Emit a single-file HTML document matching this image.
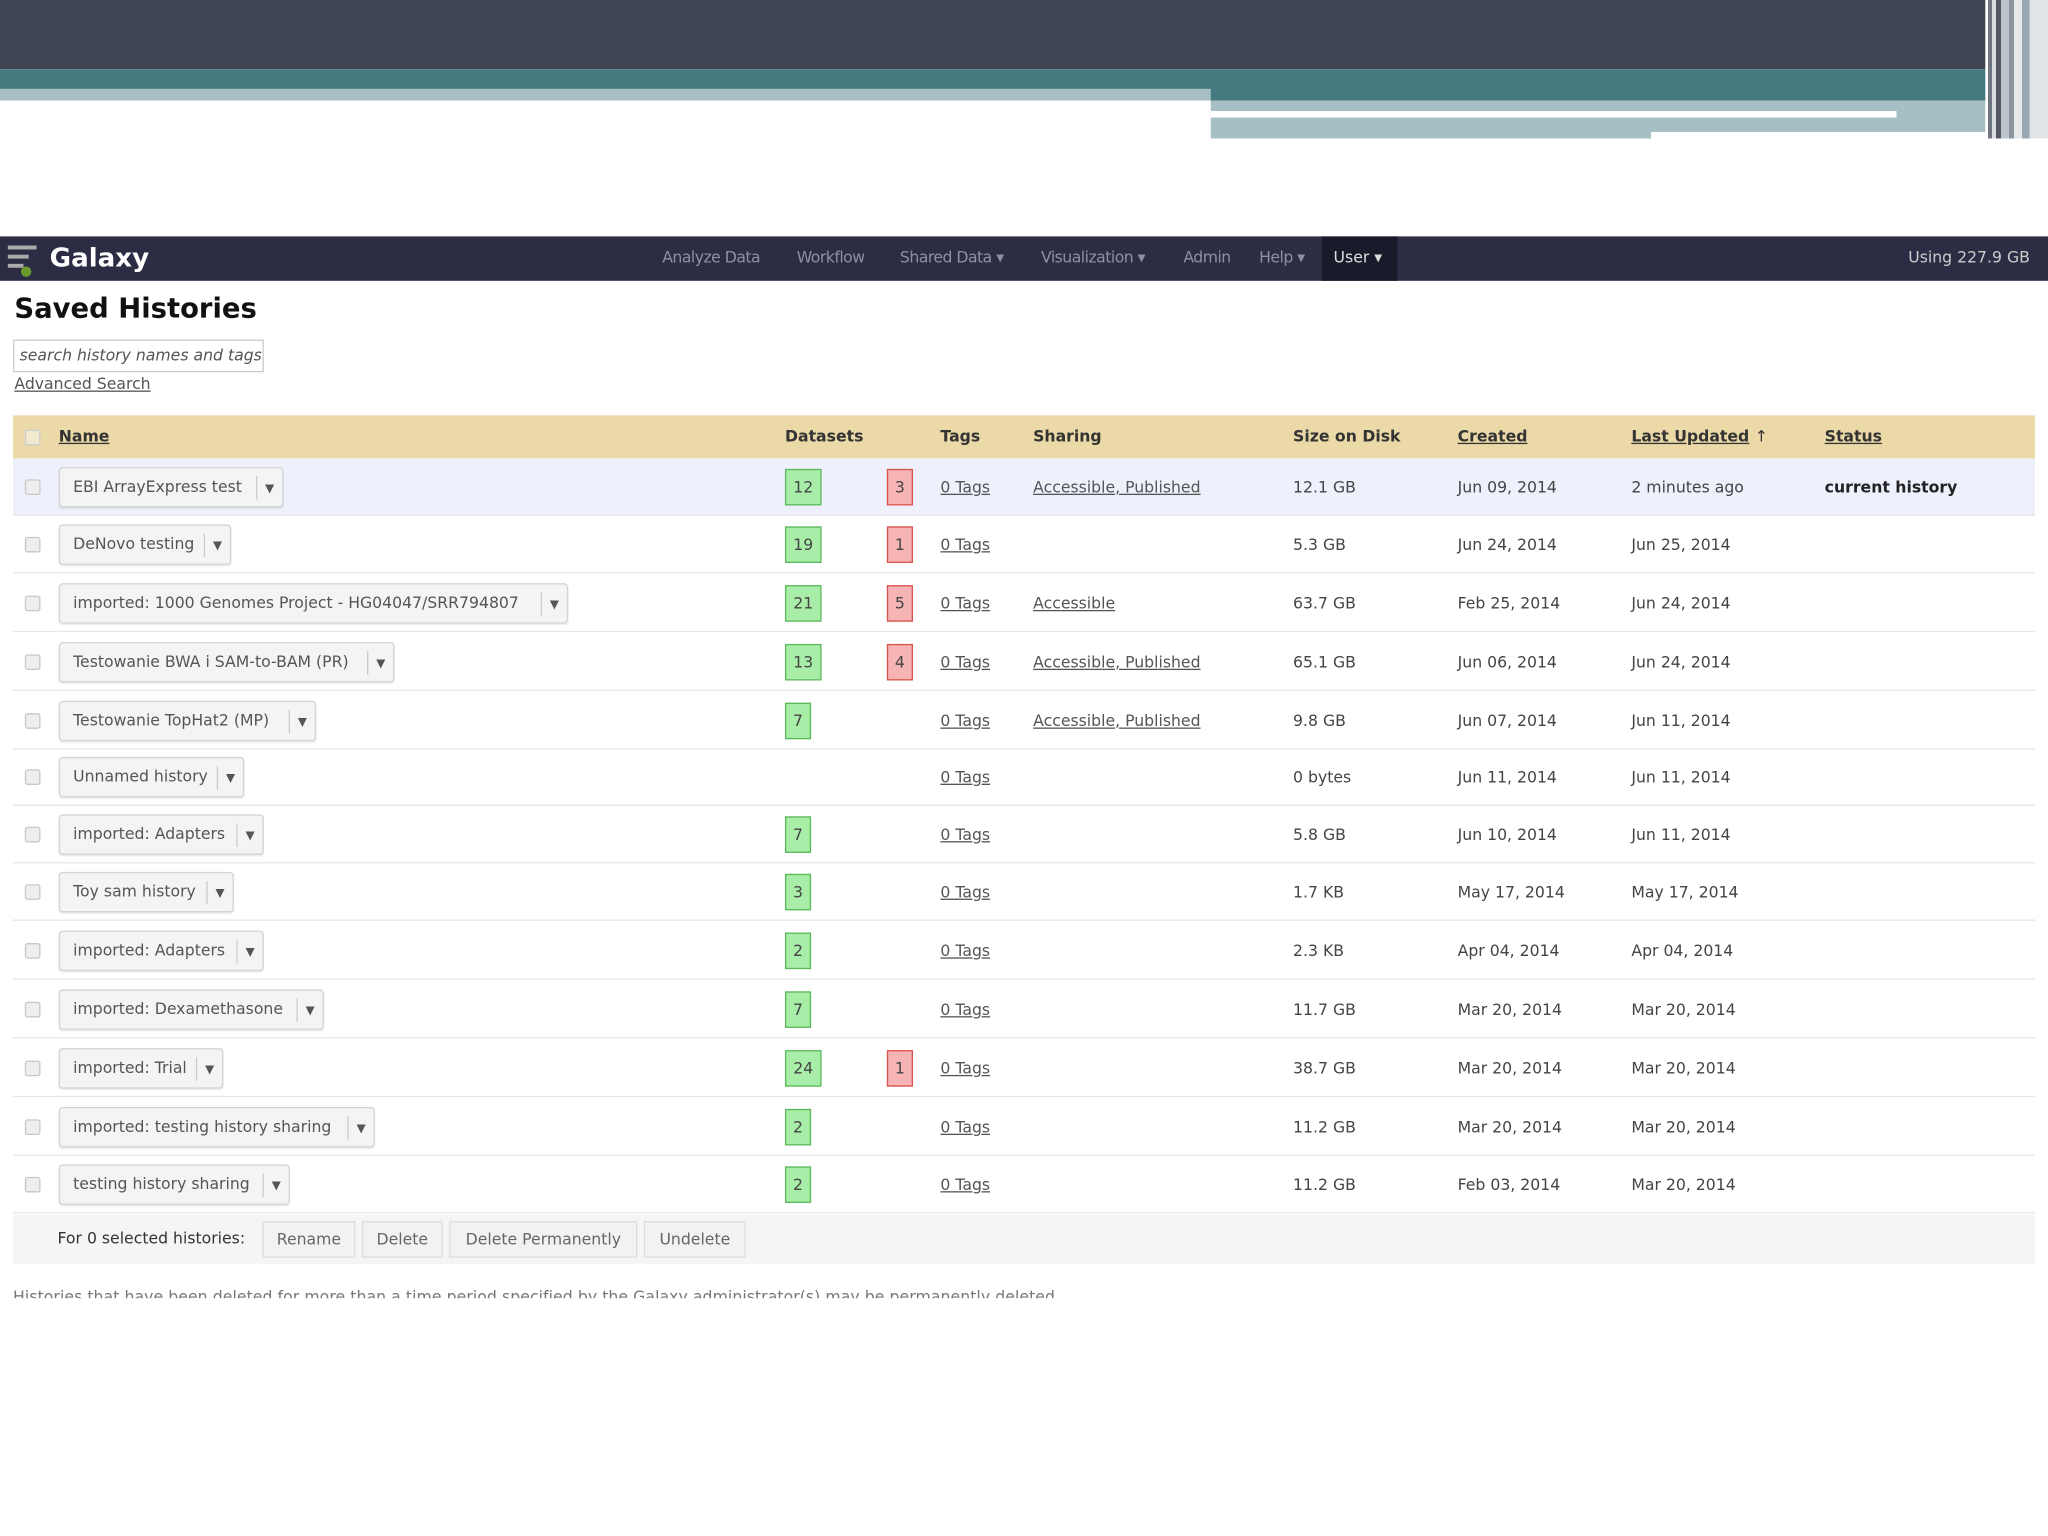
<!DOCTYPE html>
<html><head><meta charset="utf-8"><style>
*{margin:0;padding:0;box-sizing:border-box}
html,body{width:2048px;height:1536px;overflow:hidden;background:#fff}
#w{position:absolute;left:0;top:0;width:1568px;height:1176px;transform:scale(1.306122);transform-origin:0 0;font-family:"DejaVu Sans","Liberation Sans",sans-serif;font-size:12px;color:#444}
.a{position:absolute}
.row{position:absolute;left:10px;width:1548px;height:44px;border-bottom:1px solid #e6e6e6}
.row>*{position:absolute;top:50%;transform:translateY(-50%);white-space:nowrap}
.cb{left:9px;width:12px;height:12px;border:1px solid #c8c8c8;border-radius:2px;background:#eee}
.nm{left:35px;height:31px;border:1px solid #d4d4d4;border-radius:3px;background:#f4f4f4;padding:0 0 0 10px;line-height:29px;color:#555;box-shadow:0 1px 1px rgba(0,0,0,.08)}
.nm i{position:absolute;right:0;top:6px;height:18px;width:20px;border-left:1px solid #ccc;font-style:normal;font-size:9px;text-align:center;line-height:20px}
.g{left:591px;width:28px;height:28px;background:#a8eea8;border:1px solid #5cb85c;text-align:center;line-height:26px;font-size:12px}
.r{left:669px;width:20px;height:28px;background:#f7b4b4;border:1px solid #d9534f;text-align:center;line-height:26px}
.t{left:710px;text-decoration:underline;color:#555}
.s{left:781px;text-decoration:underline;color:#555}
.z{left:980px}.c{left:1106px}.u{left:1239px}
.n{position:absolute;top:190px;color:#8e90a0;font-size:12px;white-space:nowrap}
</style></head><body><div id="w">
<div class="a" style="left:0;top:0;width:1568px;height:53px;background:#3f4452"></div>
<div class="a" style="left:0;top:53px;width:1568px;height:24px;background:#457b80"></div>
<div class="a" style="left:0;top:68px;width:927px;height:9px;background:#a6bfc4"></div>
<div class="a" style="left:0;top:77px;width:927px;height:30px;background:#fff"></div>
<div class="a" style="left:927px;top:77px;width:610px;height:29px;background:#a6bfc4"></div>
<div class="a" style="left:927px;top:85px;width:525px;height:5px;background:#fff"></div>
<div class="a" style="left:1264px;top:101px;width:274px;height:6px;background:#fff"></div>
<div class="a" style="left:1520px;top:0;width:48px;height:106px;background:linear-gradient(90deg,#fff 0,#fff 2px,#6e7482 2px,#6e7482 5px,#d8dde2 5px,#d8dde2 8px,#556 8px,#556 12px,#bcc5cc 12px,#bcc5cc 18px,#8a95a0 18px,#8a95a0 22px,#e5e9ec 22px,#e5e9ec 28px,#9aa6b0 28px,#9aa6b0 34px,#dfe4e8 34px)"></div>
<div class="a" style="left:0;top:181px;width:1568px;height:34px;background:#2c2d44"></div>
<div class="a" style="left:1012px;top:181px;width:58px;height:34px;background:#1a1b2a"></div>
<div class="a" style="left:6px;top:188px;width:22px;height:3px;background:#aaa"></div>
<div class="a" style="left:6px;top:195px;width:16px;height:3px;background:#aaa"></div>
<div class="a" style="left:6px;top:202px;width:12px;height:3px;background:#aaa"></div>
<div class="a" style="left:16px;top:204px;width:8px;height:8px;border-radius:4px;background:#6b9a2c"></div>
<div class="a" style="left:38px;top:185px;font-size:20px;font-weight:bold;color:#fff">Galaxy</div>
<span class="n" style="left:507px;letter-spacing:-0.4px">Analyze Data</span>
<span class="n" style="left:610px;letter-spacing:-0.4px">Workflow</span>
<span class="n" style="left:689px;letter-spacing:-0.4px">Shared Data ▾</span>
<span class="n" style="left:797px;letter-spacing:-0.4px">Visualization ▾</span>
<span class="n" style="left:906px;letter-spacing:-0.4px">Admin</span>
<span class="n" style="left:964px;letter-spacing:-0.4px">Help ▾</span>
<span class="n" style="left:1021px;color:#ddd">User ▾</span>
<div class="a" style="left:1461px;top:190px;color:#ccc;font-size:12px">Using 227.9 GB</div>
<div class="a" style="left:11px;top:224px;font-size:21px;font-weight:bold;color:#111">Saved Histories</div>
<div class="a" style="left:10px;top:260px;width:192px;height:25px;border:1px solid #ccc;padding:4px;font-style:italic;color:#555;overflow:hidden;white-space:nowrap">search history names and tags</div>
<div class="a" style="left:11px;top:287px;text-decoration:underline;color:#555">Advanced Search</div>
<div class="a" style="left:10px;top:318px;width:1548px;height:33px;background:#ebd9a8;font-weight:bold;color:#333">
<div class="a" style="left:9px;top:11px;width:12px;height:12px;border:1px solid #ccc;background:#f2ead0"></div>
<span class="a" style="left:35px;top:9px;text-decoration:underline">Name</span>
<span class="a" style="left:591px;top:9px">Datasets</span>
<span class="a" style="left:710px;top:9px">Tags</span>
<span class="a" style="left:781px;top:9px">Sharing</span>
<span class="a" style="left:980px;top:9px">Size on Disk</span>
<span class="a" style="left:1106px;top:9px;text-decoration:underline">Created</span>
<span class="a" style="left:1239px;top:9px"><u>Last Updated</u> <span style="font-weight:normal">↑</span></span>
<span class="a" style="left:1387px;top:9px;text-decoration:underline">Status</span>
</div>
<div class="row" style="top:351px;background:#eef0fb"><span class="cb"></span><span class="nm" style="width:172px">EBI ArrayExpress test<i>▼</i></span><span class="g">12</span><span class="r">3</span><span class="t">0 Tags</span><span class="s">Accessible, Published</span><span class="z">12.1 GB</span><span class="c">Jun 09, 2014</span><span class="u">2 minutes ago</span><span style="left:1387px;font-weight:bold;color:#222">current history</span></div>
<div class="row" style="top:395px"><span class="cb"></span><span class="nm" style="width:132px">DeNovo testing<i>▼</i></span><span class="g">19</span><span class="r">1</span><span class="t">0 Tags</span><span class="z">5.3 GB</span><span class="c">Jun 24, 2014</span><span class="u">Jun 25, 2014</span></div>
<div class="row" style="top:440px"><span class="cb"></span><span class="nm" style="width:390px">imported: 1000 Genomes Project - HG04047/SRR794807<i>▼</i></span><span class="g">21</span><span class="r">5</span><span class="t">0 Tags</span><span class="s">Accessible</span><span class="z">63.7 GB</span><span class="c">Feb 25, 2014</span><span class="u">Jun 24, 2014</span></div>
<div class="row" style="top:485px"><span class="cb"></span><span class="nm" style="width:257px">Testowanie BWA i SAM-to-BAM (PR)<i>▼</i></span><span class="g">13</span><span class="r">4</span><span class="t">0 Tags</span><span class="s">Accessible, Published</span><span class="z">65.1 GB</span><span class="c">Jun 06, 2014</span><span class="u">Jun 24, 2014</span></div>
<div class="row" style="top:530px"><span class="cb"></span><span class="nm" style="width:197px">Testowanie TopHat2 (MP)<i>▼</i></span><span class="g" style="width:20px">7</span><span class="t">0 Tags</span><span class="s">Accessible, Published</span><span class="z">9.8 GB</span><span class="c">Jun 07, 2014</span><span class="u">Jun 11, 2014</span></div>
<div class="row" style="top:573px"><span class="cb"></span><span class="nm" style="width:142px">Unnamed history<i>▼</i></span><span class="t">0 Tags</span><span class="z">0 bytes</span><span class="c">Jun 11, 2014</span><span class="u">Jun 11, 2014</span></div>
<div class="row" style="top:617px"><span class="cb"></span><span class="nm" style="width:157px">imported: Adapters<i>▼</i></span><span class="g" style="width:20px">7</span><span class="t">0 Tags</span><span class="z">5.8 GB</span><span class="c">Jun 10, 2014</span><span class="u">Jun 11, 2014</span></div>
<div class="row" style="top:661px"><span class="cb"></span><span class="nm" style="width:134px">Toy sam history<i>▼</i></span><span class="g" style="width:20px">3</span><span class="t">0 Tags</span><span class="z">1.7 KB</span><span class="c">May 17, 2014</span><span class="u">May 17, 2014</span></div>
<div class="row" style="top:706px"><span class="cb"></span><span class="nm" style="width:157px">imported: Adapters<i>▼</i></span><span class="g" style="width:20px">2</span><span class="t">0 Tags</span><span class="z">2.3 KB</span><span class="c">Apr 04, 2014</span><span class="u">Apr 04, 2014</span></div>
<div class="row" style="top:751px"><span class="cb"></span><span class="nm" style="width:203px">imported: Dexamethasone<i>▼</i></span><span class="g" style="width:20px">7</span><span class="t">0 Tags</span><span class="z">11.7 GB</span><span class="c">Mar 20, 2014</span><span class="u">Mar 20, 2014</span></div>
<div class="row" style="top:796px"><span class="cb"></span><span class="nm" style="width:126px">imported: Trial<i>▼</i></span><span class="g">24</span><span class="r">1</span><span class="t">0 Tags</span><span class="z">38.7 GB</span><span class="c">Mar 20, 2014</span><span class="u">Mar 20, 2014</span></div>
<div class="row" style="top:841px"><span class="cb"></span><span class="nm" style="width:242px">imported: testing history sharing<i>▼</i></span><span class="g" style="width:20px">2</span><span class="t">0 Tags</span><span class="z">11.2 GB</span><span class="c">Mar 20, 2014</span><span class="u">Mar 20, 2014</span></div>
<div class="row" style="top:885px"><span class="cb"></span><span class="nm" style="width:177px">testing history sharing<i>▼</i></span><span class="g" style="width:20px">2</span><span class="t">0 Tags</span><span class="z">11.2 GB</span><span class="c">Feb 03, 2014</span><span class="u">Mar 20, 2014</span></div>
<div class="a" style="left:10px;top:930px;width:1548px;height:38px;background:#f5f5f5"></div>
<div class="a" style="left:44px;top:941px;color:#333">For 0 selected histories:</div>
<div class="a" style="left:201px;top:935px;width:71px;height:28px;border:1px solid #ddd;background:#f2f2f2;text-align:center;line-height:26px;color:#666">Rename</div>
<div class="a" style="left:277px;top:935px;width:62px;height:28px;border:1px solid #ddd;background:#f2f2f2;text-align:center;line-height:26px;color:#666">Delete</div>
<div class="a" style="left:344px;top:935px;width:144px;height:28px;border:1px solid #ddd;background:#f2f2f2;text-align:center;line-height:26px;color:#666">Delete Permanently</div>
<div class="a" style="left:493px;top:935px;width:78px;height:28px;border:1px solid #ddd;background:#f2f2f2;text-align:center;line-height:26px;color:#666">Undelete</div>
<div class="a" style="left:10px;top:986px;width:822px;height:8px;overflow:hidden"><div style="font-size:12px;color:#777;white-space:nowrap;letter-spacing:0.05px">Histories that have been deleted for more than a time period specified by the Galaxy administrator(s) may be permanently deleted.</div></div>
</div></body></html>
